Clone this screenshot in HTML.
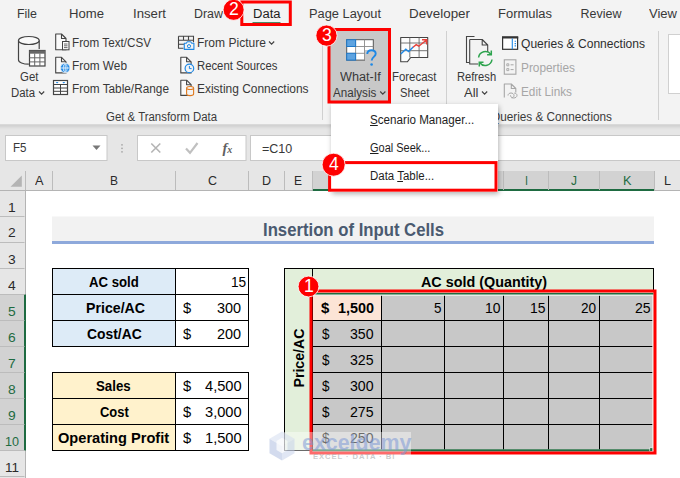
<!DOCTYPE html>
<html><head><meta charset="utf-8"><title>Insertion of Input Cells</title>
<style>
html,body{margin:0;padding:0}
body{width:680px;height:478px;overflow:hidden;background:#fff;position:relative;font-family:"Liberation Sans",sans-serif}
.u{position:absolute;white-space:nowrap;line-height:1;transform-origin:0 50%}
div,svg{position:absolute}
u{text-decoration-thickness:1px;text-underline-offset:1px}
</style></head><body>
<svg width="680" height="478" viewBox="0 0 680 478" style="left:0;top:0"><rect x="0" y="0" width="680" height="125" fill="#f3f3f3"/>
<rect x="0" y="125" width="680" height="66" fill="#e6e6e6"/>
<rect x="0" y="124" width="680" height="1" fill="#d9d9d9"/><rect x="0" y="125" width="680" height="1" fill="#d2d2d2"/><rect x="0" y="126" width="680" height="1" fill="#d6d6d6"/><rect x="0" y="127" width="680" height="1" fill="#dcdcdc"/><rect x="0" y="128" width="680" height="1" fill="#e1e1e1"/><rect x="0" y="129" width="680" height="1" fill="#e4e4e4"/>
<rect x="252.5" y="22.200" width="28" height="1.800" fill="#217346"/>
<rect x="322.0" y="31" width="1" height="89" fill="#d0d0d0"/>
<rect x="446.0" y="31" width="1" height="89" fill="#d0d0d0"/>
<rect x="658.0" y="31" width="1" height="89" fill="#d0d0d0"/>
<rect x="668.5" y="34.5" width="14" height="59" fill="#fff" stroke="#d0d0d0"/>
<rect x="328" y="29" width="62" height="74" fill="#c8c8c8"/>
<g fill="none" stroke="#444" stroke-width="1.2"><path d="M18.5 40.5v19.5c0 2.3 4.6 4.2 10.3 4.2M39.2 40.5v8.5" /><ellipse cx="28.85" cy="40.5" rx="10.35" ry="4" fill="#fafafa"/></g>
<rect x="29.5" y="50.5" width="15.5" height="15.5" fill="#fff" stroke="#444" stroke-width="1.2"/><rect x="29.5" y="50.5" width="15.5" height="3.2" fill="#666"/><path d="M29.5 57.8h15.5M29.5 61.9h15.5M34.7 53.5v12.5M39.9 53.5v12.5" stroke="#666" stroke-width="1" fill="none"/>
<path d="M39 91.5l2.6 2.6l2.6 -2.6" fill="none" stroke="#444" stroke-width="1.2"/>
<path d="M269 41.5l2.6 2.6l2.6 -2.6" fill="none" stroke="#444" stroke-width="1.2"/>
<path d="M380.2 91.5l2.6 2.6l2.6 -2.6" fill="none" stroke="#444" stroke-width="1.2"/>
<path d="M482 91.5l2.6 2.6l2.6 -2.6" fill="none" stroke="#444" stroke-width="1.2"/>
<path d="M55.7 34h5.800000000000001l4.5 4.5v11.3h-10.3z" fill="#fafafa" stroke="#444" stroke-width="1.1" stroke-linejoin="round"/><path d="M61.5 34v4.5h4.5" fill="none" stroke="#444" stroke-width="1.1" stroke-linejoin="round"/>
<rect x="62.5" y="41.5" width="6.5" height="8.3" fill="#fafafa" stroke="#444" stroke-width="1"/><path d="M64 44h3.5M64 45.8h3.5M64 47.6h3.5" stroke="#444" stroke-width="0.8"/>
<path d="M55.7 57.3h5.800000000000001l4.5 4.5v11.1h-10.3z" fill="#fafafa" stroke="#444" stroke-width="1.1" stroke-linejoin="round"/><path d="M61.5 57.3v4.5h4.5" fill="none" stroke="#444" stroke-width="1.1" stroke-linejoin="round"/>
<circle cx="65.2" cy="68" r="4.8" fill="#1e88e5" stroke="#f3f3f3" stroke-width="0.8"/><path d="M61 68h8.4M65.2 63.7v8.6" stroke="#fff" stroke-width="0.8"/><ellipse cx="65.2" cy="68" rx="2" ry="4.2" fill="none" stroke="#fff" stroke-width="0.7"/>
<rect x="53.5" y="80.5" width="14" height="14" fill="#fff" stroke="#444" stroke-width="1.2"/><path d="M53.5 84.5h14M53.5 88h14M53.5 91.3h14M60.5 84.5v10" stroke="#444" stroke-width="1" fill="none"/><path d="M55.6 81.9h3l-1.5 1.6zM62.3 81.9h3l-1.5 1.6z" fill="#1e88e5"/>
<path d="M178.5 36.2h15v6M178.5 36.2v12h5M178.5 40.2h15M178.5 44.2h5.5M183.5 36.2v4M188.5 36.2v4" fill="none" stroke="#444" stroke-width="1.1"/><path d="M184.3 43.2h2l1-1.4h3.4l1 1.4h2.2v6.2h-9.6z" fill="#f3f3f3" stroke="#1e88e5" stroke-width="1.1" stroke-linejoin="round"/><circle cx="189" cy="46.2" r="1.6" fill="none" stroke="#1e88e5" stroke-width="1"/>
<path d="M180.8 57.3h5.800000000000001l4.5 4.5v11.1h-10.3z" fill="#fafafa" stroke="#444" stroke-width="1.1" stroke-linejoin="round"/><path d="M186.60000000000002 57.3v4.5h4.5" fill="none" stroke="#444" stroke-width="1.1" stroke-linejoin="round"/>
<circle cx="189.4" cy="68.4" r="4.3" fill="#f3f3f3" stroke="#1e88e5" stroke-width="1.2"/><path d="M189.4 66v2.6h2.2" fill="none" stroke="#1e88e5" stroke-width="1"/>
<path d="M180.8 80.2h5.800000000000001l4.5 4.5v10.7h-10.3z" fill="#fafafa" stroke="#444" stroke-width="1.1" stroke-linejoin="round"/><path d="M186.60000000000002 80.2v4.5h4.5" fill="none" stroke="#444" stroke-width="1.1" stroke-linejoin="round"/>
<path d="M186.6 88v6c0 1 1.6 1.6 3.5 1.6s3.5-.6 3.5-1.6v-6" fill="#f3f3f3" stroke="#e07a1f" stroke-width="1.1"/><ellipse cx="190.1" cy="88" rx="3.5" ry="1.5" fill="#f3f3f3" stroke="#e07a1f" stroke-width="1.1"/>
<rect x="346.7" y="39.7" width="26.6" height="20.4" fill="#fff" stroke="#555" stroke-width="1"/><path d="M346.7 46.5h26.6M346.7 53.3h26.6M355.6 39.7v20.4M364.5 39.7v20.4" stroke="#8a8a8a" stroke-width="0.9" fill="none"/><rect x="346.7" y="39.7" width="8.9" height="6.8" fill="#5ea3e0" stroke="#1e78c8" stroke-width="1"/><rect x="346.7" y="53.3" width="8.9" height="6.8" fill="#5ea3e0" stroke="#1e78c8" stroke-width="1"/><rect x="365" y="50" width="12" height="16.5" fill="#c8c8c8"/><path d="M367.3 54c0-2.3 1.8-3.8 4.2-3.8s4.2 1.5 4.2 3.6c0 3-4 3.2-4 6.6" fill="none" stroke="#1e88e5" stroke-width="1.9"/><circle cx="371.6" cy="64.5" r="1.3" fill="#1e88e5"/>
<path d="M400.7 37.5h27v20h-17l-3.2 4.2h-6.8z" fill="#fcfcfc" stroke="#444" stroke-width="1.1" stroke-linejoin="round"/><path d="M400.7 43h27M400.7 50.7h27M409.8 37.5v20M419.1 37.5v20" stroke="#666" stroke-width="0.9" fill="none"/><path d="M400.8 54l5-4.700 2.800 2.300 4.600-4.600" fill="none" stroke="#1e88e5" stroke-width="1.400"/><path d="M413 47.200l3.200-2.600 2.600 1.600 7.400-6M422 39.700h4.700v4.700" fill="none" stroke="#e8413a" stroke-width="1.400"/>
<path d="M474.5 36.5h-8v26h3" fill="none" stroke="#444" stroke-width="1.1"/><path d="M469.7 39.5h12.5l5.5 5.5v7M469.7 39.5v24.5h8.5M482.2 39.5v5.5h5.5" fill="none" stroke="#444" stroke-width="1.1" stroke-linejoin="round"/><path d="M478.6 57.5a6.8 6.8 0 0 1 12.2-3.2M492 59.5a6.8 6.8 0 0 1-12.2 3.2" fill="none" stroke="#2da44e" stroke-width="1.5"/><path d="M491.3 50.5v4.2h-4.2M479.3 66.5v-4.2h4.2" fill="none" stroke="#2da44e" stroke-width="1.5"/>
<rect x="502.6" y="37.3" width="15" height="12" fill="#fff" stroke="#333" stroke-width="1.2"/><rect x="502" y="36.3" width="16.2" height="2.2" fill="#333"/><path d="M512.3 38.5v10.8" stroke="#1e88e5" stroke-width="1.1"/><path d="M514.6 41.3h1.4M514.6 43.6h1.4M514.6 45.9h1.4" stroke="#1e88e5" stroke-width="1.1"/>
<rect x="504.3" y="59.8" width="11.6" height="14.4" fill="none" stroke="#a6a6a6" stroke-width="1.1"/><path d="M506.8 63.8h2v2h-2zM506.8 68.6h2v2h-2z" fill="none" stroke="#a6a6a6" stroke-width="0.9"/><path d="M510.6 64.8h3M510.6 69.6h3" stroke="#a6a6a6" stroke-width="1"/>
<path d="M504.3 97.5v-13.5h7l4.5 4.5v4M511.3 84v4.5h4.5" fill="none" stroke="#a6a6a6" stroke-width="1.1" stroke-linejoin="round"/><path d="M508 95.5c0-1.6 1.5-2.5 3-2.5s3 1 3 2.5-1.3 2.3-2.6 2.3M510.5 95.3c0 1.600 1.500 2.700 3.200 2.700s3.300-1 3.300-2.600-1.400-2.300-2.800-2.300" fill="none" stroke="#a6a6a6" stroke-width="1"/>
<rect x="5.500" y="135.500" width="101.500" height="25" fill="#fff" stroke="#c8c8c8"/>
<path d="M92.500 145.500h8l-4 4.500z" fill="#777"/>
<circle cx="122" cy="144.800" r="0.900" fill="#a8a8a8"/><circle cx="122" cy="148.300" r="0.900" fill="#a8a8a8"/><circle cx="122" cy="151.800" r="0.900" fill="#a8a8a8"/>
<rect x="137.500" y="135.500" width="108.500" height="25" fill="#fff" stroke="#c8c8c8"/>
<rect x="250.500" y="135.500" width="440" height="25" fill="#fff" stroke="#c8c8c8"/>
<path d="M151.300 143.500l9 9M160.300 143.500l-9 9" stroke="#b4b4b4" stroke-width="1.600" fill="none"/>
<path d="M186 148.500l4 4.300l7.500-9.800" stroke="#c0c0c0" stroke-width="2.200" fill="none"/>
<rect x="312.500" y="171" width="341.500" height="18" fill="#d2d2d2"/>
<rect x="312.500" y="189" width="341.500" height="2" fill="#1e6b41"/>
<rect x="0" y="190" width="312.500" height="1" fill="#b4b4b4"/><rect x="654" y="190" width="26" height="1" fill="#b4b4b4"/>
<rect x="25" y="171" width="1" height="19" fill="#bcbcbc"/>
<rect x="52" y="171" width="1" height="19" fill="#bcbcbc"/>
<rect x="175" y="171" width="1" height="19" fill="#bcbcbc"/>
<rect x="248" y="171" width="1" height="19" fill="#bcbcbc"/>
<rect x="284" y="171" width="1" height="19" fill="#bcbcbc"/>
<rect x="312" y="171" width="1" height="19" fill="#bcbcbc"/>
<rect x="381" y="171" width="1" height="19" fill="#bcbcbc"/>
<rect x="444" y="171" width="1" height="19" fill="#bcbcbc"/>
<rect x="503" y="171" width="1" height="19" fill="#bcbcbc"/>
<rect x="548" y="171" width="1" height="19" fill="#bcbcbc"/>
<rect x="599" y="171" width="1" height="19" fill="#bcbcbc"/>
<rect x="654" y="171" width="1" height="19" fill="#bcbcbc"/>
<path d="M21.800 175.500v11.300h-11.300z" fill="#b4b4b4"/>
<rect x="0" y="191" width="25" height="287" fill="#e6e6e6"/>
<rect x="0" y="294.500" width="25" height="156" fill="#d2d2d2"/>
<rect x="25" y="191" width="1" height="287" fill="#b4b4b4"/>
<rect x="24" y="294.500" width="2" height="156" fill="#1e6b41"/>
<rect x="0" y="216" width="24.500" height="1" fill="#bcbcbc"/>
<rect x="0" y="242" width="24.500" height="1" fill="#bcbcbc"/>
<rect x="0" y="268" width="24.500" height="1" fill="#bcbcbc"/>
<rect x="0" y="294" width="24.500" height="1" fill="#bcbcbc"/>
<rect x="0" y="320" width="24.500" height="1" fill="#bcbcbc"/>
<rect x="0" y="346" width="24.500" height="1" fill="#bcbcbc"/>
<rect x="0" y="372" width="24.500" height="1" fill="#bcbcbc"/>
<rect x="0" y="398" width="24.500" height="1" fill="#bcbcbc"/>
<rect x="0" y="424" width="24.500" height="1" fill="#bcbcbc"/>
<rect x="0" y="450" width="24.500" height="1" fill="#bcbcbc"/>
<rect x="0" y="476" width="24.500" height="1" fill="#bcbcbc"/>
<rect x="52" y="216.500" width="602" height="25" fill="#f2f2f2"/><rect x="52" y="241" width="602" height="3" fill="#8ea9db"/>
<rect x="52" y="268" width="123" height="78" fill="#ddebf7"/>
<rect x="52" y="372" width="123" height="78" fill="#fff2cc"/>
<rect x="52" y="268" width="197" height="1" fill="#000"/>
<rect x="52" y="294" width="197" height="1" fill="#000"/>
<rect x="52" y="320" width="197" height="1" fill="#000"/>
<rect x="52" y="346" width="197" height="1" fill="#000"/>
<rect x="52" y="372" width="197" height="1" fill="#000"/>
<rect x="52" y="398" width="197" height="1" fill="#000"/>
<rect x="52" y="424" width="197" height="1" fill="#000"/>
<rect x="52" y="450" width="197" height="1" fill="#000"/>
<rect x="52" y="268" width="1" height="79" fill="#000"/><rect x="52" y="372" width="1" height="79" fill="#000"/>
<rect x="175" y="268" width="1" height="79" fill="#000"/><rect x="175" y="372" width="1" height="79" fill="#000"/>
<rect x="248" y="268" width="1" height="79" fill="#000"/><rect x="248" y="372" width="1" height="79" fill="#000"/>
<rect x="284" y="268" width="370" height="182" fill="#e2efda"/>
<rect x="313" y="295.5" width="340" height="154" fill="#c8c8c8"/>
<rect x="313" y="295.5" width="68.5" height="24.5" fill="#fce4d6"/>
<rect x="313" y="320" width="340" height="1" fill="#000"/>
<rect x="313" y="346" width="340" height="1" fill="#000"/>
<rect x="313" y="372" width="340" height="1" fill="#000"/>
<rect x="313" y="398" width="340" height="1" fill="#000"/>
<rect x="313" y="424" width="340" height="1" fill="#000"/>
<rect x="381" y="295.500" width="1" height="154" fill="#000"/>
<rect x="444" y="295.500" width="1" height="154" fill="#000"/>
<rect x="503" y="295.500" width="1" height="154" fill="#000"/>
<rect x="548" y="295.500" width="1" height="154" fill="#000"/>
<rect x="599" y="295.500" width="1" height="154" fill="#000"/>
<rect x="284" y="268" width="370" height="1" fill="#000"/><rect x="284" y="268" width="1" height="183" fill="#000"/><rect x="284" y="450" width="28" height="1" fill="#000"/><rect x="312" y="268" width="1" height="183" fill="#000"/><rect x="653" y="268" width="1" height="22" fill="#000"/>
<rect x="312.500" y="293" width="341" height="1.700" fill="#1e6b41"/><rect x="312.500" y="294.700" width="341" height="0.900" fill="#f4f4f4"/>
<rect x="312.500" y="449.300" width="338" height="2.200" fill="#1e6b41"/><rect x="652.300" y="295" width="1.200" height="154" fill="#f4f4f4"/><rect x="649.800" y="447.800" width="3" height="3.500" fill="#1e6b41" stroke="#fff" stroke-width="0.600"/></svg>
<span class="u" style="left:16.5px;top:8.0px;font-size:12.5px;color:#383838;transform:scaleX(0.992);">File</span>
<span class="u" style="left:68.5px;top:8.0px;font-size:12.5px;color:#383838;transform:scaleX(1.050);">Home</span>
<span class="u" style="left:132.5px;top:8.0px;font-size:12.5px;color:#383838;transform:scaleX(1.055);">Insert</span>
<span class="u" style="left:193.5px;top:8.0px;font-size:12.5px;color:#383838;transform:scaleX(0.994);">Draw</span>
<span class="u" style="left:252.5px;top:8.0px;font-size:12.5px;color:#1e1e1e;transform:scaleX(1.041);">Data</span>
<span class="u" style="left:308.5px;top:8.0px;font-size:12.5px;color:#383838;transform:scaleX(1.026);">Page Layout</span>
<span class="u" style="left:408.5px;top:8.0px;font-size:12.5px;color:#383838;transform:scaleX(1.070);">Developer</span>
<span class="u" style="left:497.5px;top:8.0px;font-size:12.5px;color:#383838;transform:scaleX(1.037);">Formulas</span>
<span class="u" style="left:580.5px;top:8.0px;font-size:12.5px;color:#383838;">Review</span>
<span class="u" style="left:648.5px;top:8.0px;font-size:12.5px;color:#383838;transform:scaleX(1.042);">View</span>
<span class="u" style="left:19.9px;top:71.0px;font-size:12.5px;color:#383838;transform:scaleX(0.913);">Get</span>
<span class="u" style="left:11.2px;top:87.0px;font-size:12.5px;color:#383838;transform:scaleX(0.913);">Data</span>
<span class="u" style="left:71.5px;top:37.0px;font-size:12.5px;color:#383838;transform:scaleX(0.935);">From Text/CSV</span>
<span class="u" style="left:71.5px;top:60.0px;font-size:12.5px;color:#383838;transform:scaleX(0.946);">From Web</span>
<span class="u" style="left:71.5px;top:83.0px;font-size:12.5px;color:#383838;transform:scaleX(0.945);">From Table/Range</span>
<span class="u" style="left:196.9px;top:37.0px;font-size:12.5px;color:#383838;transform:scaleX(0.963);">From Picture</span>
<span class="u" style="left:196.9px;top:60.0px;font-size:12.5px;color:#383838;transform:scaleX(0.904);">Recent Sources</span>
<span class="u" style="left:196.9px;top:83.0px;font-size:12.5px;color:#383838;transform:scaleX(0.956);">Existing Connections</span>
<span class="u" style="left:105.5px;top:111.0px;font-size:12.5px;color:#3b3b3b;transform:scaleX(0.913);">Get &amp; Transform Data</span>
<span class="u" style="left:340.1px;top:71.0px;font-size:12.5px;color:#383838;transform:scaleX(1.015);">What-If</span>
<span class="u" style="left:333.4px;top:87.0px;font-size:12.5px;color:#383838;transform:scaleX(0.930);">Analysis</span>
<span class="u" style="left:392.1px;top:71.0px;font-size:12.5px;color:#383838;transform:scaleX(0.913);">Forecast</span>
<span class="u" style="left:400.0px;top:87.0px;font-size:12.5px;color:#383838;transform:scaleX(0.897);">Sheet</span>
<span class="u" style="left:456.9px;top:71.0px;font-size:12.5px;color:#383838;transform:scaleX(0.893);">Refresh</span>
<span class="u" style="left:464.0px;top:87.0px;font-size:12.5px;color:#383838;transform:scaleX(1.043);">All</span>
<span class="u" style="left:520.5px;top:38.0px;font-size:12.5px;color:#2e2e2e;transform:scaleX(0.965);">Queries &amp; Connections</span>
<span class="u" style="left:520.5px;top:62.0px;font-size:12.5px;color:#a6a6a6;transform:scaleX(0.948);">Properties</span>
<span class="u" style="left:520.5px;top:86.0px;font-size:12.5px;color:#a6a6a6;transform:scaleX(0.941);">Edit Links</span>
<span class="u" style="left:491.0px;top:111.0px;font-size:12.5px;color:#3b3b3b;transform:scaleX(0.941);">Queries &amp; Connections</span>
<span class="u" style="left:12.5px;top:142.4px;font-size:12.6px;color:#383838;transform:scaleX(0.918);">F5</span>
<span class="u" style="left:261.9px;top:142.2px;font-size:13px;color:#383838;transform:scaleX(0.963);">=C10</span>
<span class="u" style="left:222.5px;top:140.7px;font-size:14.5px;color:#606060;font-family:'Liberation Serif',serif;font-weight:bold;"><i>f</i><i style="font-size:10px">x</i></span>
<span class="u" style="left:34.8px;top:174.2px;font-size:13px;color:#2b2b2b;transform:scaleX(0.980);">A</span>
<span class="u" style="left:110.0px;top:174.2px;font-size:13px;color:#2b2b2b;transform:scaleX(0.923);">B</span>
<span class="u" style="left:207.5px;top:174.2px;font-size:13px;color:#2b2b2b;transform:scaleX(0.958);">C</span>
<span class="u" style="left:261.5px;top:174.2px;font-size:13px;color:#2b2b2b;transform:scaleX(0.958);">D</span>
<span class="u" style="left:294.0px;top:174.2px;font-size:13px;color:#2b2b2b;transform:scaleX(0.923);">E</span>
<span class="u" style="left:663.5px;top:174.2px;font-size:13px;color:#2b2b2b;transform:scaleX(0.968);">L</span>
<span class="u" style="left:524.5px;top:174.2px;font-size:13px;color:#1e6b41;transform:scaleX(0.828);">I</span>
<span class="u" style="left:571.0px;top:174.2px;font-size:13px;color:#1e6b41;transform:scaleX(0.923);">J</span>
<span class="u" style="left:622.8px;top:174.2px;font-size:13px;color:#1e6b41;transform:scaleX(0.980);">K</span>
<span class="u" style="left:8.2px;top:201.2px;font-size:13px;color:#2b2b2b;transform:scaleX(1.064);">1</span>
<span class="u" style="left:8.2px;top:226.2px;font-size:13px;color:#2b2b2b;transform:scaleX(1.064);">2</span>
<span class="u" style="left:8.2px;top:253.2px;font-size:13px;color:#2b2b2b;transform:scaleX(1.064);">3</span>
<span class="u" style="left:8.2px;top:279.2px;font-size:13px;color:#2b2b2b;transform:scaleX(1.064);">4</span>
<span class="u" style="left:8.2px;top:305.2px;font-size:13px;color:#1e6b41;transform:scaleX(1.064);">5</span>
<span class="u" style="left:8.2px;top:331.2px;font-size:13px;color:#1e6b41;transform:scaleX(1.064);">6</span>
<span class="u" style="left:8.2px;top:357.2px;font-size:13px;color:#1e6b41;transform:scaleX(1.064);">7</span>
<span class="u" style="left:8.2px;top:383.2px;font-size:13px;color:#1e6b41;transform:scaleX(1.064);">8</span>
<span class="u" style="left:8.2px;top:409.2px;font-size:13px;color:#1e6b41;transform:scaleX(1.064);">9</span>
<span class="u" style="left:5.1px;top:435.2px;font-size:13px;color:#1e6b41;transform:scaleX(0.968);">10</span>
<span class="u" style="left:5.1px;top:461.2px;font-size:13px;color:#2b2b2b;transform:scaleX(1.037);">11</span>
<span class="u" style="left:262.5px;top:222.2px;font-size:17.5px;color:#4a5a70;font-weight:bold;transform:scaleX(0.955);">Insertion of Input Cells</span>
<span class="u" style="left:88.7px;top:274.5px;font-size:14.6px;color:#000;font-weight:bold;transform:scaleX(0.903);">AC sold</span>
<span class="u" style="left:230.5px;top:275.0px;font-size:14.3px;color:#000;transform:scaleX(0.956);">15</span>
<span class="u" style="left:85.5px;top:301.3px;font-size:14.6px;color:#000;font-weight:bold;transform:scaleX(0.970);">Price/AC</span>
<span class="u" style="left:183.3px;top:300.5px;font-size:14.3px;color:#000;transform:scaleX(1.031);">$</span>
<span class="u" style="left:217.2px;top:300.5px;font-size:14.3px;color:#000;transform:scaleX(1.010);">300</span>
<span class="u" style="left:87.3px;top:327.3px;font-size:14.6px;color:#000;font-weight:bold;transform:scaleX(0.950);">Cost/AC</span>
<span class="u" style="left:183.3px;top:326.5px;font-size:14.3px;color:#000;transform:scaleX(1.031);">$</span>
<span class="u" style="left:217.2px;top:326.5px;font-size:14.3px;color:#000;transform:scaleX(1.010);">200</span>
<span class="u" style="left:96.4px;top:379.3px;font-size:14.6px;color:#000;font-weight:bold;transform:scaleX(0.910);">Sales</span>
<span class="u" style="left:183.3px;top:378.5px;font-size:14.3px;color:#000;transform:scaleX(1.031);">$</span>
<span class="u" style="left:204.7px;top:378.5px;font-size:14.3px;color:#000;transform:scaleX(1.023);">4,500</span>
<span class="u" style="left:99.9px;top:405.3px;font-size:14.6px;color:#000;font-weight:bold;transform:scaleX(0.885);">Cost</span>
<span class="u" style="left:183.3px;top:404.5px;font-size:14.3px;color:#000;transform:scaleX(1.031);">$</span>
<span class="u" style="left:204.7px;top:404.5px;font-size:14.3px;color:#000;transform:scaleX(1.023);">3,000</span>
<span class="u" style="left:58.0px;top:431.3px;font-size:14.6px;color:#000;font-weight:bold;">Operating Profit</span>
<span class="u" style="left:183.3px;top:430.5px;font-size:14.3px;color:#000;transform:scaleX(1.031);">$</span>
<span class="u" style="left:204.7px;top:430.5px;font-size:14.3px;color:#000;transform:scaleX(1.023);">1,500</span>
<span class="u" style="left:420.5px;top:274.5px;font-size:14.6px;color:#000;font-weight:bold;transform:scaleX(0.984);">AC sold (Quantity)</span>
<span class="u" style="left:321.0px;top:301.3px;font-size:14.6px;color:#000;font-weight:bold;transform:scaleX(1.022);">$</span>
<span class="u" style="left:338.0px;top:301.3px;font-size:14.6px;color:#000;font-weight:bold;transform:scaleX(0.985);">1,500</span>
<span class="u" style="left:321.5px;top:326.5px;font-size:14.3px;color:#000;transform:scaleX(0.943);">$</span>
<span class="u" style="left:350.4px;top:326.5px;font-size:14.3px;color:#000;transform:scaleX(0.989);">350</span>
<span class="u" style="left:321.5px;top:352.5px;font-size:14.3px;color:#000;transform:scaleX(0.943);">$</span>
<span class="u" style="left:350.4px;top:352.5px;font-size:14.3px;color:#000;transform:scaleX(0.989);">325</span>
<span class="u" style="left:321.5px;top:378.5px;font-size:14.3px;color:#000;transform:scaleX(0.943);">$</span>
<span class="u" style="left:350.4px;top:378.5px;font-size:14.3px;color:#000;transform:scaleX(0.989);">300</span>
<span class="u" style="left:321.5px;top:404.5px;font-size:14.3px;color:#000;transform:scaleX(0.943);">$</span>
<span class="u" style="left:350.4px;top:404.5px;font-size:14.3px;color:#000;transform:scaleX(0.989);">275</span>
<span class="u" style="left:321.5px;top:430.5px;font-size:14.3px;color:#000;transform:scaleX(0.943);">$</span>
<span class="u" style="left:350.4px;top:430.5px;font-size:14.3px;color:#000;transform:scaleX(0.989);">250</span>
<span class="u" style="left:434.2px;top:300.5px;font-size:14.3px;color:#000;transform:scaleX(0.943);">5</span>
<span class="u" style="left:485.0px;top:300.5px;font-size:14.3px;color:#000;transform:scaleX(0.974);">10</span>
<span class="u" style="left:530.0px;top:300.5px;font-size:14.3px;color:#000;transform:scaleX(0.974);">15</span>
<span class="u" style="left:581.2px;top:300.5px;font-size:14.3px;color:#000;transform:scaleX(0.949);">20</span>
<span class="u" style="left:635.2px;top:300.5px;font-size:14.3px;color:#000;transform:scaleX(0.987);">25</span>
<span class="u" style="left:299.2px;top:358px;font-size:14.6px;font-weight:bold;color:#000;transform-origin:50% 50%;transform:translate(-50%,-50%) rotate(-90deg) scaleX(0.97)">Price/AC</span>
<div style="left:331px;top:104px;width:167px;height:88px;background:#fff;box-shadow:1px 2px 5px rgba(0,0,0,.3)"></div><span class="u" style="left:369.8px;top:114.0px;font-size:12.5px;color:#1e1e1e;transform:scaleX(0.931);"><u>S</u>cenario Manager...</span>
<span class="u" style="left:369.8px;top:142.0px;font-size:12.5px;color:#1e1e1e;transform:scaleX(0.878);"><u>G</u>oal Seek...</span>
<span class="u" style="left:369.8px;top:170.0px;font-size:12.5px;color:#1e1e1e;transform:scaleX(0.918);">Data <u>T</u>able...</span>
<svg width="680" height="478" viewBox="0 0 680 478" style="left:0;top:0"><g fill="none" stroke="#fe0000" stroke-width="3"><rect x="241.800" y="2" width="48.500" height="22.500"/><rect x="329" y="29.500" width="60.500" height="72.500"/><rect x="329.600" y="162.600" width="166.400" height="27.600"/><rect x="311" y="291" width="344" height="162"/></g>
<circle cx="233.6" cy="9.8" r="10.5" fill="#fe0000" stroke="#fff" stroke-width="0.800"/>
<circle cx="326.5" cy="35.6" r="10.6" fill="#fe0000" stroke="#fff" stroke-width="0.800"/>
<circle cx="333.6" cy="164.7" r="11.5" fill="#fe0000" stroke="#fff" stroke-width="0.800"/>
<circle cx="308.5" cy="286.5" r="10.4" fill="#fe0000" stroke="#fff" stroke-width="0.800"/></svg>
<span class="u" style="left:228.7px;top:0.4px;font-size:18.5px;color:#fff;transform:scaleX(0.952);">2</span>
<span class="u" style="left:321.6px;top:26.2px;font-size:18.5px;color:#fff;transform:scaleX(0.952);">3</span>
<span class="u" style="left:328.7px;top:155.3px;font-size:18.5px;color:#fff;transform:scaleX(0.952);">4</span>
<span class="u" style="left:303.6px;top:277.1px;font-size:18.5px;color:#fff;transform:scaleX(0.952);">1</span>
<div style="left:270px;top:431.500px;width:141px;height:27px;background:rgba(255,255,255,0.42)"></div><svg width="30" height="34" viewBox="267 429 30 34" style="left:267px;top:429px;opacity:.5"><path d="M282 431.500l12.500 7.200l-12.500 7.300l-12.500-7.300z" fill="#d3dcf0"/><path d="M269.500 438.700l12.500 7.300v14.500l-12.500-7.300z" fill="#a9b9de"/><path d="M294.500 438.700l-12.500 7.300v14.500l12.500-7.300z" fill="#c3cfea"/><path d="M276.500 441l5.500-3.200l5.500 3.200v9l-5.500 3.200l-5.500-3.200z" fill="#fff" opacity=".75"/></svg><span class="u" style="left:301.5px;top:432.1px;font-size:22px;color:rgba(125,152,215,0.550);font-weight:bold;transform:scaleX(0.973);">exceldemy</span>
<span class="u" style="left:313.0px;top:452.6px;font-size:7.5px;color:rgba(160,160,160,0.550);font-weight:bold;transform:scaleX(1.022);letter-spacing:0.9px;">EXCEL · DATA · BI</span>
</body></html>
